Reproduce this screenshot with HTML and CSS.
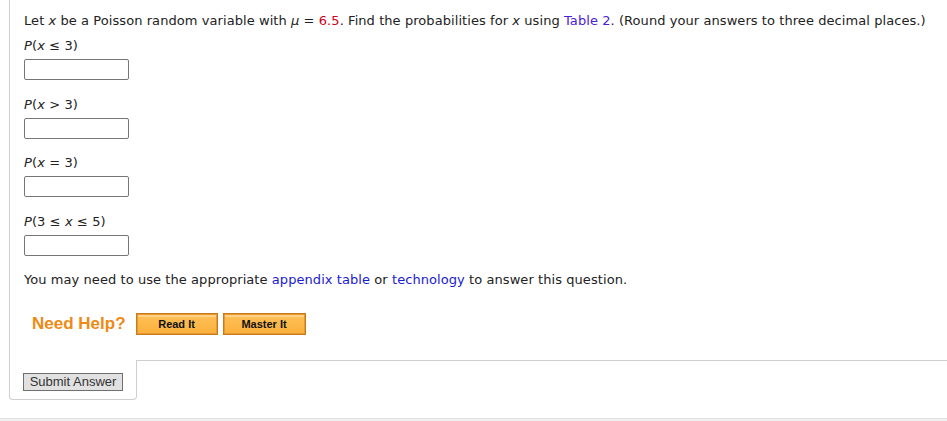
FILE: index.html
```html
<!DOCTYPE html>
<html>
<head>
<meta charset="utf-8">
<link rel="stylesheet" href="styles.css">
</head>
<body>
<div class="wrap">
  <div class="question">
    <p class="intro">Let <i>x</i> be a Poisson random variable with <i>μ</i> = <span class="red">6.5</span>. Find the probabilities for <i>x</i> using <a class="tbl">Table 2</a>. (Round your answers to three decimal places.)</p>
    <div class="part">
      <div class="label"><i>P</i>(<i>x</i> ≤ 3)</div>
      <div class="input"></div>
    </div>
    <div class="part">
      <div class="label"><i>P</i>(<i>x</i> &gt; 3)</div>
      <div class="input"></div>
    </div>
    <div class="part">
      <div class="label"><i>P</i>(<i>x</i> = 3)</div>
      <div class="input"></div>
    </div>
    <div class="part">
      <div class="label"><i>P</i>(3 ≤ <i>x</i> ≤ 5)</div>
      <div class="input"></div>
    </div>
    <p class="note">You may need to use the appropriate <a class="lnk">appendix table</a> or <a class="lnk">technology</a> to answer this question.</p>
    <div class="help">
      <span class="need">Need Help?</span>
      <span class="hbtn read">Read It</span>
      <span class="hbtn master">Master It</span>
    </div>
  </div>
  <div class="footer-row">
    <div class="tab"><span class="submit">Submit Answer</span></div>
    <div class="filler"></div>
  </div>
</div>
<div class="bottombar"></div>
</body>
</html>
```
FILE: styles.css
```css
html, body {
  margin: 0;
  padding: 0;
  background: #fff;
}
body {
  font-family: "DejaVu Sans", Verdana, sans-serif;
  font-size: 13px;
  color: #222;
}
.wrap {
  margin-left: 9px;
}
.question {
  border-left: 1px solid #cfcfcf;
  padding: 12px 0 25px 14px;
}
.intro, .note {
  margin: 0;
  line-height: 18px;
  white-space: nowrap;
  letter-spacing: 0.07px;
}
.red { color: #d0021b; }
.tbl { color: #4b20d6; }
.lnk { color: #1a1ad0; }
.part {
  margin-top: 6px;
}
.part + .part { margin-top: 14.67px; }
.label {
  padding-top: 1px;
  line-height: 17px;
  letter-spacing: 0.1px;
}
.input {
  margin-top: 5px;
  width: 103px;
  height: 19px;
  border: 1px solid #767676;
  border-radius: 2px;
  background: #fff;
}
.note {
  margin-top: 15px;
}
.help {
  margin-top: 24px;
  margin-left: 8px;
  display: flex;
  align-items: center;
  height: 22px;
}
.need {
  font-family: "Liberation Sans", Arial, sans-serif;
  font-weight: bold;
  font-size: 17px;
  color: #ee8a14;
  margin-right: 10px;
}
.hbtn {
  box-sizing: border-box;
  height: 22px;
  border: 1px solid #c77a1e;
  box-shadow: inset 0 0 0 1px #e8982e, inset 0 2px 0 1px #fdd38a;
  background: linear-gradient(#fec15a, #fbb03b);
  font-family: "Liberation Sans", Arial, sans-serif;
  font-weight: bold;
  font-size: 11px;
  color: #111;
  display: flex;
  align-items: center;
  justify-content: center;
}
.read { width: 82px; }
.master { width: 83px; margin-left: 5px; }
.footer-row {
  display: flex;
}
.tab {
  width: 128px;
  height: 40px;
  box-sizing: border-box;
  border-left: 1px solid #cfcfcf;
  border-right: 1px solid #cfcfcf;
  border-bottom: 1px solid #cfcfcf;
  border-radius: 0 0 4px 4px;
  padding: 13px 0 0 13px;
}
.filler {
  flex: 1;
  border-top: 1px solid #cfcfcf;
}
.submit {
  display: inline-block;
  box-sizing: border-box;
  width: 100px;
  height: 18px;
  border: 1px solid #6f6f6f;
  background: #e1e1e1;
  font-family: "Liberation Sans", Arial, sans-serif;
  font-size: 13px;
  line-height: 16px;
  color: #333;
  text-align: center;
}
.bottombar {
  margin-top: 18px;
  height: 4px;
  background: #f0f0f0;
  border-top: 1px solid #e2e2e2;
}
```
